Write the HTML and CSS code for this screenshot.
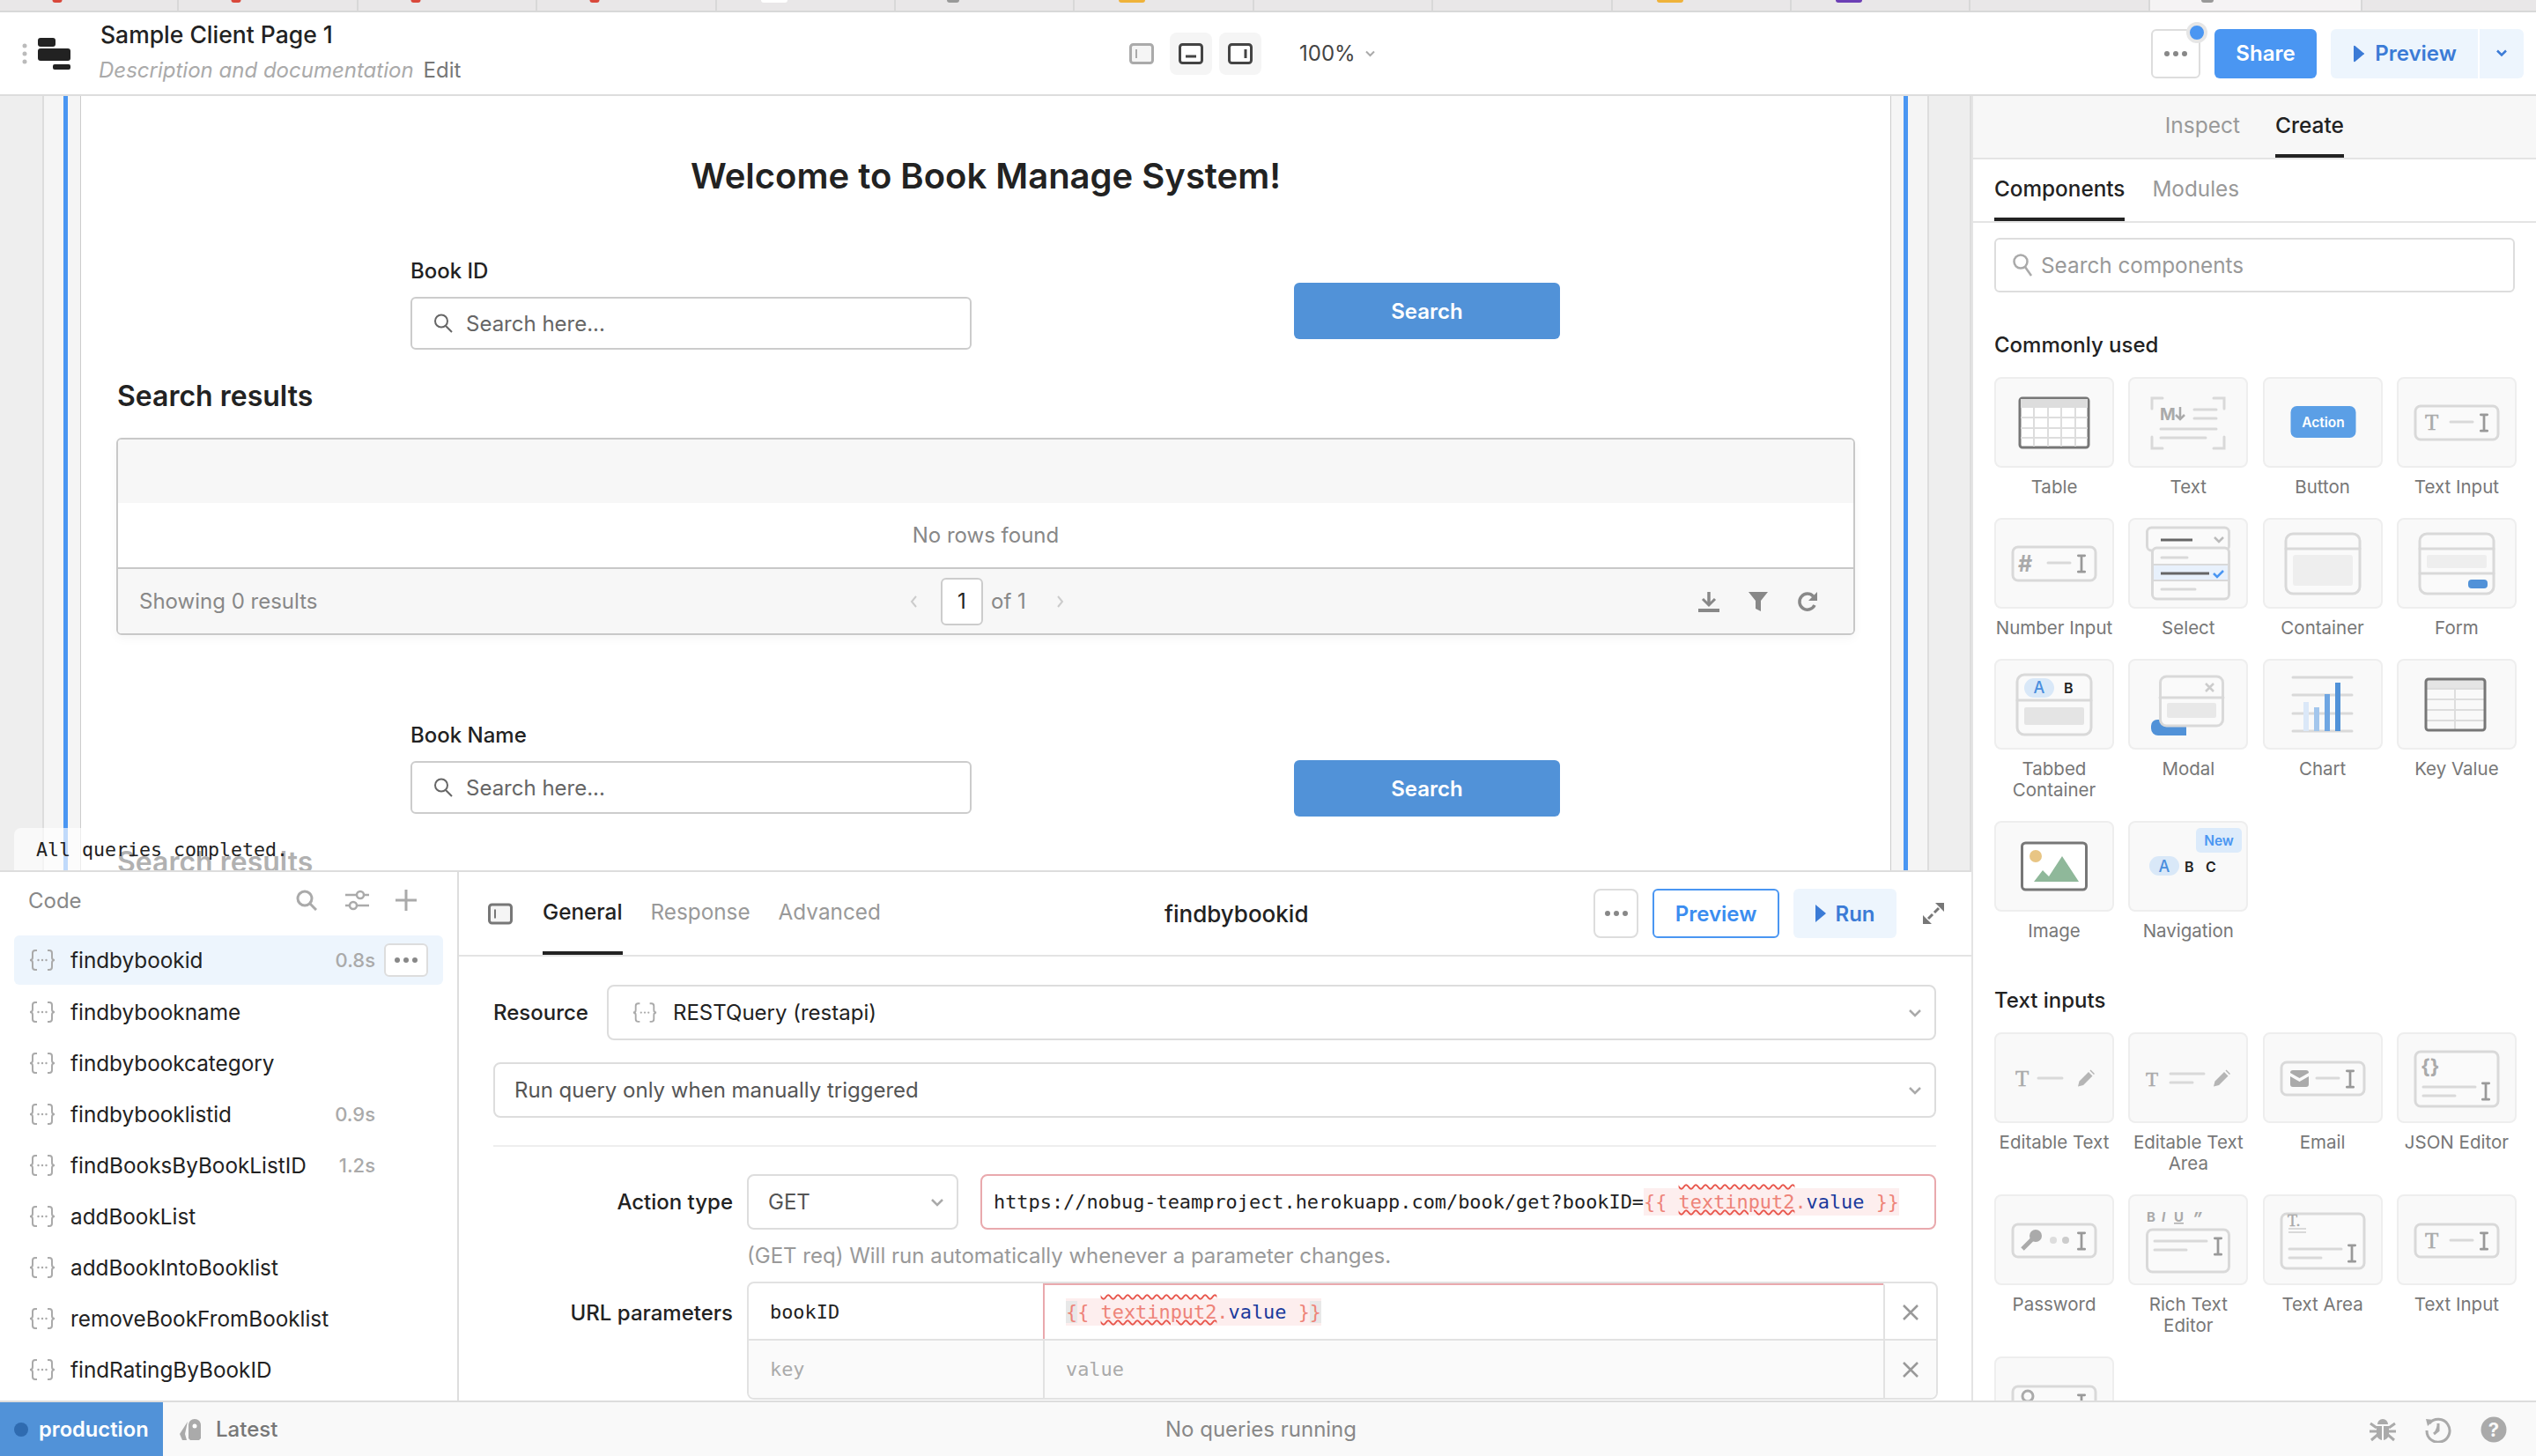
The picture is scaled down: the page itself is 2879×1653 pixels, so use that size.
FILE: index.html
```html
<!DOCTYPE html>
<html lang="en">
<head>
    <meta charset="UTF-8">
    <title>Sample Client Page 1</title>
    <link rel="stylesheet" href="styles.css">
</head>
<body>
<svg class="defs" width="0" height="0">
    <symbol id="ibeam" viewBox="0 0 12 24" overflow="visible"><path d="M2 2h8M6 2v20M2 22h8" fill="none" stroke="#999" stroke-width="3" stroke-linecap="round"/></symbol>
    <symbol id="query" viewBox="0 0 32 26"><path d="M10 2H8a3 3 0 0 0-3 3v5a3 3 0 0 1-3 3 3 3 0 0 1 3 3v5a3 3 0 0 0 3 3h2M22 2h2a3 3 0 0 1 3 3v5a3 3 0 0 0 3 3 3 3 0 0 0-3 3v5a3 3 0 0 1-3 3h-2" fill="none" stroke="#aaa" stroke-width="2"/><circle cx="11.5" cy="13" r="1.2" fill="#aaa"/><circle cx="16" cy="13" r="1.2" fill="#aaa"/><circle cx="20.5" cy="13" r="1.2" fill="#aaa"/></symbol>
    <symbol id="pencil" viewBox="0 0 20 20"><path d="M1 19l1.5-6L13 2.5l4.5 4.5L7 17.500zM14.500 1l1-1 4.500 4.500-1 1z" fill="#b5b5b5"/></symbol>
</svg>
<div class="app">
    <div class="browser-tabs">
        <div class="tab"><i class="fav red"></i></div>
        <div class="tab"><i class="fav red"></i></div>
        <div class="tab"><i class="fav red"></i></div>
        <div class="tab"><i class="fav red"></i></div>
        <div class="tab"><i class="fav white"></i></div>
        <div class="tab"><i class="fav grey"></i></div>
        <div class="tab"><i class="fav yellow"></i></div>
        <div class="tab"></div>
        <div class="tab"></div>
        <div class="tab"><i class="fav yellow"></i></div>
        <div class="tab"><i class="fav purple"></i></div>
        <div class="tab"></div>
        <div class="tab active"><i class="fav grey"></i></div>
    </div>

    <header class="topbar">
        <div class="brand">
            <svg class="grip" width="6" height="24" viewBox="0 0 6 24"><circle cx="3" cy="3" r="2.500"/><circle cx="3" cy="12" r="2.500"/><circle cx="3" cy="21" r="2.500"/></svg>
            <svg class="logo" width="37" height="36" viewBox="0 0 37 36"><rect width="20" height="10" rx="3"/><rect y="12" width="37" height="14" rx="3"/><rect x="17" y="30" width="20" height="6" rx="2"/></svg>
            <div class="page-info">
                <div class="page-title">Sample Client Page 1</div>
                <div class="page-desc"><em>Description and documentation</em><span>Edit</span></div>
            </div>
        </div>
        <div class="view-toggles">
            <span class="view-btn"><svg width="28" height="24" viewBox="0 0 28 24"><rect x="1.500" y="1.500" width="25" height="21" rx="3" fill="#f5f5f5" stroke="#aaa" stroke-width="3"/><path d="M8 7v10" stroke="#aaa" stroke-width="2"/></svg></span>
            <span class="view-btn on"><svg width="28" height="24" viewBox="0 0 28 24"><rect x="1.500" y="1.500" width="25" height="21" rx="3" fill="#fff" stroke="#444" stroke-width="3"/><path d="M8 15h12" stroke="#444" stroke-width="3"/></svg></span>
            <span class="view-btn on"><svg width="28" height="24" viewBox="0 0 28 24"><rect x="1.500" y="1.500" width="25" height="21" rx="3" fill="#fff" stroke="#444" stroke-width="3"/><path d="M20 7v10" stroke="#444" stroke-width="3"/></svg></span>
        </div>
        <div class="zoom-level">100%<svg width="13" height="8" viewBox="0 0 13 8"><path d="M2 1.500l4.500 4.500L11 1.500" fill="none" stroke="#aaa" stroke-width="2"/></svg></div>
        <div class="top-actions">
            <button class="dots-btn"><span class="dots"><i></i><i></i><i></i></span><b class="notify"></b></button>
            <button class="share-btn">Share</button>
            <div class="preview-split">
                <button class="preview-btn"><svg width="14" height="20" viewBox="0 0 14 20"><path d="M2 1.500a1 1 0 0 1 1.500-.5L13 9a1 1 0 0 1 0 2l-9.500 8a1 1 0 0 1-1.500-.5z" fill="#3b7bd6"/></svg>Preview</button>
                <button class="preview-more"><svg width="14" height="9" viewBox="0 0 14 9"><path d="M2 1.500l5 5 5-5" fill="none" stroke="#3b7bd6" stroke-width="2.500"/></svg></button>
            </div>
        </div>
    </header>

    <div class="workspace">
        <div class="main-col">
            <div class="canvas-area">
                <div class="gutter"></div>
                <div class="frame">
                    <div class="frame-inner">
                        <div class="canvas">
                            <h1 class="welcome">Welcome to Book Manage System!</h1>
                            <div class="search-row">
                                <div class="field">
                                    <label>Book ID</label>
                                    <div class="search-box"><svg width="22" height="22" viewBox="0 0 22 22"><circle cx="9" cy="8.500" r="7" fill="none" stroke="#666" stroke-width="2"/><path d="M14 14l7 7" stroke="#666" stroke-width="2"/></svg>Search here...</div>
                                </div>
                                <button class="search-btn">Search</button>
                            </div>
                            <h2 class="results-title">Search results</h2>
                            <div class="data-table">
                                <div class="table-head"></div>
                                <div class="table-empty">No rows found</div>
                                <div class="table-foot">
                                    <span class="count">Showing 0 results</span>
                                    <div class="pager">
                                        <svg width="10" height="16" viewBox="0 0 10 16"><path d="M8 2L3 8l5 6" fill="none" stroke="#ccc" stroke-width="2"/></svg>
                                        <span class="page-box">1</span>
                                        <span class="page-of">of 1</span>
                                        <svg width="10" height="16" viewBox="0 0 10 16"><path d="M2 2l5 6-5 6" fill="none" stroke="#ccc" stroke-width="2"/></svg>
                                    </div>
                                    <div class="table-tools">
                                        <svg width="24" height="24" viewBox="0 0 24 24"><path d="M12 1v13" stroke="#888" stroke-width="3.500"/><path d="M5 9l7 7 7-7" fill="none" stroke="#888" stroke-width="3"/><path d="M0 22h24" stroke="#888" stroke-width="4"/></svg>
                                        <svg width="24" height="24" viewBox="0 0 24 24"><path d="M1 1h22l-8 10v12l-6-3v-9z" fill="#888"/></svg>
                                        <svg width="24" height="24" viewBox="0 0 24 24"><path d="M20 16a9 9 0 1 1-1.500-10" fill="none" stroke="#888" stroke-width="3.500"/><path d="M23 1v10H13z" fill="#888"/></svg>
                                    </div>
                                </div>
                            </div>
                            <div class="search-row second">
                                <div class="field">
                                    <label>Book Name</label>
                                    <div class="search-box"><svg width="22" height="22" viewBox="0 0 22 22"><circle cx="9" cy="8.500" r="7" fill="none" stroke="#666" stroke-width="2"/><path d="M14 14l7 7" stroke="#666" stroke-width="2"/></svg>Search here...</div>
                                </div>
                                <button class="search-btn">Search</button>
                            </div>
                            <h2 class="results-title last">Search results</h2>
                        </div>
                    </div>
                </div>
                <div class="gutter right"></div>
                <div class="toast">All queries completed.</div>
            </div>

            <div class="editor">
                <aside class="code-list">
                    <div class="code-head">
                        <span>Code</span>
                        <svg class="first" width="24" height="24" viewBox="0 0 24 24"><circle cx="10" cy="10" r="8" fill="none" stroke="#aaa" stroke-width="3"/><path d="M16 16l7 7" stroke="#aaa" stroke-width="3"/></svg>
                        <svg width="28" height="24" viewBox="0 0 28 24"><path d="M1 6h27M1 18h27" stroke="#aaa" stroke-width="2.500"/><circle cx="18" cy="6" r="4" fill="#fff" stroke="#aaa" stroke-width="2.500"/><circle cx="10" cy="18" r="4" fill="#fff" stroke="#aaa" stroke-width="2.500"/></svg>
                        <svg width="26" height="26" viewBox="0 0 26 26"><path d="M13 1v24M1 13h24" stroke="#aaa" stroke-width="3"/></svg>
                    </div>
                    <div class="query selected"><svg width="32" height="26"><use href="#query"/></svg><span class="q-name">findbybookid</span><span class="q-time">0.8s</span><span class="q-more"><span class="dots"><i></i><i></i><i></i></span></span></div>
                    <div class="query"><svg width="32" height="26"><use href="#query"/></svg><span class="q-name">findbybookname</span></div>
                    <div class="query"><svg width="32" height="26"><use href="#query"/></svg><span class="q-name">findbybookcategory</span></div>
                    <div class="query"><svg width="32" height="26"><use href="#query"/></svg><span class="q-name">findbybooklistid</span><span class="q-time">0.9s</span></div>
                    <div class="query"><svg width="32" height="26"><use href="#query"/></svg><span class="q-name">findBooksByBookListID</span><span class="q-time">1.2s</span></div>
                    <div class="query"><svg width="32" height="26"><use href="#query"/></svg><span class="q-name">addBookList</span></div>
                    <div class="query"><svg width="32" height="26"><use href="#query"/></svg><span class="q-name">addBookIntoBooklist</span></div>
                    <div class="query"><svg width="32" height="26"><use href="#query"/></svg><span class="q-name">removeBookFromBooklist</span></div>
                    <div class="query"><svg width="32" height="26"><use href="#query"/></svg><span class="q-name">findRatingByBookID</span></div>
                </aside>

                <section class="query-panel">
                    <div class="panel-head">
                        <div class="panel-tabs">
                            <svg width="28" height="25" viewBox="0 0 28 24"><rect x="1.500" y="1.500" width="25" height="21" rx="3" fill="#f5f5f5" stroke="#777" stroke-width="3"/><path d="M8 7v10" stroke="#777" stroke-width="2"/></svg>
                            <span class="ptab on">General</span>
                            <span class="ptab">Response</span>
                            <span class="ptab">Advanced</span>
                        </div>
                        <div class="panel-title">findbybookid</div>
                        <div class="panel-actions">
                            <button class="dots-btn small"><span class="dots"><i></i><i></i><i></i></span></button>
                            <button class="outline-btn">Preview</button>
                            <button class="run-btn"><svg width="14" height="22" viewBox="0 0 14 22"><path d="M1 1l12 10L1 21z" fill="#3b7bd6"/></svg>Run</button>
                            <svg class="expand" width="26" height="26" viewBox="0 0 26 26"><path d="M15 1h10v10zM1 15v10h10z" fill="#777"/><path d="M19 7l-5 5M7 19l5-5" stroke="#777" stroke-width="3"/></svg>
                        </div>
                    </div>
                    <div class="panel-body">
                        <div class="res-row">
                            <span class="res-label">Resource</span>
                            <div class="select grow"><svg width="30" height="25"><use href="#query"/></svg><span class="res-value">RESTQuery (restapi)</span><svg class="chev" width="16" height="10" viewBox="0 0 16 10"><path d="M2 2l6 6 6-6" fill="none" stroke="#aaa" stroke-width="2.500"/></svg></div>
                        </div>
                        <div class="select trigger"><span>Run query only when manually triggered</span><svg class="chev" width="16" height="10" viewBox="0 0 16 10"><path d="M2 2l6 6 6-6" fill="none" stroke="#aaa" stroke-width="2.500"/></svg></div>
                        <hr class="divider">
                        <div class="form-row">
                            <span class="form-label">Action type</span>
                            <div class="select method"><span>GET</span><svg class="chev" width="16" height="10" viewBox="0 0 16 10"><path d="M2 2l6 6 6-6" fill="none" stroke="#aaa" stroke-width="2.500"/></svg></div>
                            <div class="url-box code">https://nobug-teamproject.herokuapp.com/book/get?bookID=<span class="tpl"><span class="br">{{</span> <span class="bad">textinput2</span><span class="br">.</span><span class="prop">value</span> <span class="br">}}</span></span></div>
                        </div>
                        <div class="hint">(GET req) Will run automatically whenever a parameter changes.</div>
                        <div class="form-row params">
                            <span class="form-label">URL parameters</span>
                            <div class="param-table code">
                                <div class="p-key">bookID</div>
                                <div class="p-val error"><span class="tpl"><span class="match">{</span><span class="br">{</span> <span class="bad">textinput2</span><span class="br">.</span><span class="prop">value</span> <span class="br">}</span><span class="match">}</span></span></div>
                                <div class="p-del"><svg width="20" height="20" viewBox="0 0 20 20"><path d="M2 2l16 16M18 2L2 18" stroke="#999" stroke-width="2.500"/></svg></div>
                                <div class="p-key empty">key</div>
                                <div class="p-val empty">value</div>
                                <div class="p-del empty"><svg width="20" height="20" viewBox="0 0 20 20"><path d="M2 2l16 16M18 2L2 18" stroke="#999" stroke-width="2.500"/></svg></div>
                            </div>
                        </div>
                    </div>
                </section>
            </div>
        </div>

        <aside class="sidebar">
            <div class="side-tabs"><span>Inspect</span><span class="on">Create</span></div>
            <div class="comp-tabs"><span class="on">Components</span><span>Modules</span></div>
            <div class="comp-search"><svg width="24" height="28" viewBox="0 0 24 28"><circle cx="10" cy="10" r="7.500" fill="none" stroke="#aaa" stroke-width="2.500"/><path d="M15 16l7 10" stroke="#aaa" stroke-width="2.500"/></svg>Search components</div>

            <h3 class="group-title">Commonly used</h3>
            <div class="comp-grid">
                <div class="comp"><div class="card"><svg viewBox="0 0 136 103">
                    <rect class="frame-dark" x="29" y="24" width="78" height="56" rx="3"/>
                    <rect x="30" y="25" width="76" height="10" fill="#ddd"/>
                    <path class="thin" d="M30 46h76M30 58h76M30 69h76M45 35v44M61 35v44M76 35v44M92 35v44"/>
                </svg></div><span>Table</span></div>
                <div class="comp"><div class="card"><svg viewBox="0 0 136 103">
                    <path class="ln" d="M39 24H27v12M97 24h12v12M27 68v13h12M109 68v13H97"/>
                    <text class="ic-text" x="36" y="49" font-size="19">M</text>
                    <path d="M59 34v14M54 43l5 5 5-5" fill="none" stroke="#aaa" stroke-width="2.500"/>
                    <path class="ln" d="M75 37h25M75 47h25M37 59h63M37 69h51"/>
                </svg></div><span>Text</span></div>
                <div class="comp"><div class="card"><svg viewBox="0 0 136 103">
                    <rect x="31.500" y="33" width="74" height="36" rx="7" fill="#5b9fe6"/>
                    <text class="ic-white" x="68.500" y="57" text-anchor="middle" font-size="15.500">Action</text>
                </svg></div><span>Button</span></div>
                <div class="comp"><div class="card"><svg viewBox="0 0 136 103">
                    <rect class="box" x="21" y="33" width="94" height="38" rx="6"/>
                    <text class="ic-serif" x="32" y="60" font-size="25">T</text>
                    <path class="ln" d="M61 51h25"/>
                    <use href="#ibeam" x="93" y="41" width="12" height="22"/>
                </svg></div><span>Text Input</span></div>

                <div class="comp"><div class="card"><svg viewBox="0 0 136 103">
                    <rect class="box" x="21" y="33" width="94" height="38" rx="6"/>
                    <text class="ic-text" x="27" y="61" font-size="25">#</text>
                    <path class="ln" d="M61 51h25"/>
                    <use href="#ibeam" x="93" y="41" width="12" height="22"/>
                </svg></div><span>Number Input</span></div>
                <div class="comp"><div class="card"><svg viewBox="0 0 136 103">
                    <rect class="box" x="21.500" y="11" width="93" height="26" rx="5"/>
                    <path d="M37 25h36" stroke="#666" stroke-width="3"/>
                    <path d="M98 22l5 5 5-5" fill="none" stroke="#bbb" stroke-width="2.500"/>
                    <rect class="box" x="27.500" y="34" width="87" height="58" rx="5"/>
                    <rect x="29" y="54" width="84" height="16" fill="#e8f1fc"/>
                    <path class="ln thin2" d="M29 53h84M29 71h84"/>
                    <path class="ln" d="M38 45h29M38 81h38"/>
                    <path d="M37 63h55" stroke="#666" stroke-width="3"/>
                    <path d="M97 63l4 4 7-7" fill="none" stroke="#4a96f2" stroke-width="2.500"/>
                </svg></div><span>Select</span></div>
                <div class="comp"><div class="card"><svg viewBox="0 0 136 103">
                    <rect class="box" x="26" y="18" width="84" height="68" rx="8"/>
                    <path class="ln" d="M26 35h84"/>
                    <rect x="34" y="42" width="68" height="35" rx="3" fill="#eee"/>
                </svg></div><span>Container</span></div>
                <div class="comp"><div class="card"><svg viewBox="0 0 136 103">
                    <rect class="box" x="26" y="18" width="84" height="68" rx="8"/>
                    <path class="ln" d="M26 35h84M26 63h84"/>
                    <rect x="34" y="42" width="68" height="15" rx="2" fill="#eee"/>
                    <rect x="81" y="70" width="22" height="10" rx="4" fill="#5192d8"/>
                </svg></div><span>Form</span></div>

                <div class="comp"><div class="card"><svg viewBox="0 0 136 103">
                    <rect class="box" x="26" y="18" width="84" height="68" rx="8"/>
                    <path class="ln" d="M26 47h84"/>
                    <rect x="34" y="22" width="34" height="22" rx="11" fill="#d9e8f8"/>
                    <text class="ic-blue" x="51" y="39" text-anchor="middle" font-size="18">A</text>
                    <text class="ic-dark" x="79" y="39" font-size="16">B</text>
                    <rect x="34" y="55" width="68" height="20" rx="2" fill="#e4e4e4"/>
                </svg></div><span>Tabbed Container</span></div>
                <div class="comp"><div class="card"><svg viewBox="0 0 136 103">
                    <path d="M26 76a7 7 0 0 1 7-7h33v18H34a8 8 0 0 1-8-8z" fill="#5192d8"/>
                    <rect class="box" x="36.500" y="20" width="71" height="56" rx="7" fill="#fafafa"/>
                    <path class="ln" d="M36 44h72"/>
                    <rect x="44" y="50" width="56" height="17" rx="2" fill="#e8e8e8"/>
                    <path d="M88 28l9 9M97 28l-9 9" stroke="#ccc" stroke-width="2.500"/>
                </svg></div><span>Modal</span></div>
                <div class="comp"><div class="card"><svg viewBox="0 0 136 103">
                    <path class="ln" d="M34 21h67M34 41h67M34 62h67M34 82h67"/>
                    <rect x="46" y="49" width="6" height="33" fill="#dbe8f8"/>
                    <rect x="58" y="55" width="6" height="27" fill="#a3c6ec"/>
                    <rect x="70" y="40" width="6" height="42" fill="#6fa6e2"/>
                    <rect x="82" y="27" width="6" height="55" fill="#5192d8"/>
                </svg></div><span>Chart</span></div>
                <div class="comp"><div class="card"><svg viewBox="0 0 136 103">
                    <rect x="33" y="23" width="67" height="11" fill="#e5e5e5"/>
                    <path class="thin" d="M33 34h67M33 46h67M33 58h67M33 70h67M66 34v46"/>
                    <rect class="frame-dark none" x="33" y="23" width="67" height="58" rx="3"/>
                </svg></div><span>Key Value</span></div>

                <div class="comp"><div class="card"><svg viewBox="0 0 136 103">
                    <rect class="frame-dark" x="31.500" y="25" width="73" height="53" rx="4"/>
                    <circle cx="47" cy="40" r="7" fill="#e8c584"/>
                    <path d="M45 69l10-13 7 7 15-23 19 29z" fill="#8fb89a"/>
                </svg></div><span>Image</span></div>
                <div class="comp"><div class="card"><svg viewBox="0 0 136 103">
                    <rect x="77" y="8" width="52" height="28" rx="5" fill="#dcebfb"/>
                    <text class="ic-new" x="103" y="28" text-anchor="middle" font-size="15.500">New</text>
                    <rect x="24" y="40" width="34" height="22" rx="11" fill="#d9e8f8"/>
                    <text class="ic-blue" x="41" y="58" text-anchor="middle" font-size="18">A</text>
                    <text class="ic-dark" x="64" y="58" font-size="16">B</text>
                    <text class="ic-dark" x="88" y="58" font-size="16">C</text>
                </svg></div><span>Navigation</span></div>
            </div>

            <h3 class="group-title next">Text inputs</h3>
            <div class="comp-grid">
                <div class="comp"><div class="card"><svg viewBox="0 0 136 103">
                    <text class="ic-serif" x="24" y="61" font-size="25">T</text>
                    <path class="ln" d="M50 52h27"/>
                    <use href="#pencil" x="94" y="42" width="20" height="21"/>
                </svg></div><span>Editable Text</span></div>
                <div class="comp"><div class="card"><svg viewBox="0 0 136 103">
                    <text class="ic-serif" x="20" y="61" font-size="23">T</text>
                    <path class="ln" d="M48 47h38M48 57h25"/>
                    <use href="#pencil" x="96" y="42" width="20" height="21"/>
                </svg></div><span>Editable Text Area</span></div>
                <div class="comp"><div class="card"><svg viewBox="0 0 136 103">
                    <rect class="box" x="21" y="34" width="94" height="37" rx="6"/>
                    <path d="M31 46a3 3 0 0 1 3-3h15a3 3 0 0 1 3 3l-10.500 6zM31 50l10.500 6L52 50v9a3 3 0 0 1-3 3H34a3 3 0 0 1-3-3z" fill="#aaa"/>
                    <path class="ln" d="M61 52h25"/>
                    <use href="#ibeam" x="93" y="42" width="12" height="22"/>
                </svg></div><span>Email</span></div>
                <div class="comp"><div class="card"><svg viewBox="0 0 136 103">
                    <rect class="box" x="21" y="22" width="94" height="62" rx="6"/>
                    <text class="ic-text" x="27" y="47" font-size="23">{}</text>
                    <path class="ln" d="M30 62h59M30 72h36"/>
                    <use href="#ibeam" x="95" y="56" width="12" height="22"/>
                </svg></div><span>JSON Editor</span></div>

                <div class="comp"><div class="card"><svg viewBox="0 0 136 103">
                    <rect class="box" x="21" y="34" width="94" height="37" rx="6"/>
                    <circle cx="47" cy="47" r="7" fill="#aaa"/><path d="M43 51L32 62" stroke="#aaa" stroke-width="5"/>
                    <circle cx="67" cy="52" r="4" fill="#ddd"/><circle cx="81" cy="52" r="4" fill="#ccc"/>
                    <use href="#ibeam" x="93" y="42" width="12" height="22"/>
                </svg></div><span>Password</span></div>
                <div class="comp"><div class="card"><svg viewBox="0 0 136 103">
                    <text class="ic-text" x="21" y="31" font-size="15">B</text>
                    <text class="ic-text" x="38" y="31" font-size="15" font-style="italic">I</text>
                    <text class="ic-text" x="52" y="31" font-size="15" text-decoration="underline">U</text>
                    <text class="ic-text" x="73" y="34" font-size="19" font-style="italic">”</text>
                    <rect class="box" x="21.500" y="40" width="93" height="48" rx="6"/>
                    <path class="ln" d="M30 53h59M30 63h36"/>
                    <use href="#ibeam" x="96" y="48" width="12" height="22"/>
                </svg></div><span>Rich Text Editor</span></div>
                <div class="comp"><div class="card"><svg viewBox="0 0 136 103">
                    <rect class="box" x="21" y="22" width="94" height="62" rx="6"/>
                    <text class="ic-serif" x="28" y="36" font-size="18">T.</text>
                    <path class="ln thin2" d="M29 39h20M29 43h20"/>
                    <path class="ln" d="M30 62h59M30 72h36"/>
                    <use href="#ibeam" x="95" y="56" width="12" height="22"/>
                </svg></div><span>Text Area</span></div>
                <div class="comp"><div class="card"><svg viewBox="0 0 136 103">
                    <rect class="box" x="21" y="34" width="94" height="37" rx="6"/>
                    <text class="ic-serif" x="32" y="61" font-size="25">T</text>
                    <path class="ln" d="M61 52h25"/>
                    <use href="#ibeam" x="93" y="42" width="12" height="22"/>
                </svg></div><span>Text Input</span></div>

                <div class="comp"><div class="card"><svg viewBox="0 0 136 103">
                    <rect class="box" x="21" y="34" width="94" height="37" rx="6"/>
                    <circle cx="38" cy="45" r="6" fill="none" stroke="#aaa" stroke-width="3"/>
                    <use href="#ibeam" x="93" y="42" width="12" height="22"/>
                </svg></div><span></span></div>
            </div>
        </aside>
    </div>

    <footer class="statusbar">
        <div class="status-left">
            <div class="env"><i></i>production</div>
            <div class="release"><svg width="26" height="26" viewBox="0 0 26 26"><path d="M10 4L1 18l3 7h5l-2-7z" fill="#aaa"/><path d="M18 1c-4 0-7 3-7 7v15l2 2h10l2-2V8c0-4-3-7-7-7z" fill="#aaa"/><circle cx="18" cy="9" r="2.500" fill="#fff"/></svg>Latest</div>
        </div>
        <div class="status-mid">No queries running</div>
        <div class="status-right">
            <svg width="30" height="30" viewBox="0 0 30 30"><path d="M9 9a6 6 0 0 1 12 0zM8 11h14v9a7 7 0 0 1-14 0z" fill="#aaa"/><path d="M15 11v16M1 8l7 5M29 8l-7 5M0 17h8M30 17h-8M2 27l7-6M28 27l-7-6" stroke="#aaa" stroke-width="3" fill="none"/><path d="M15 11v16" stroke="#f9f9f9" stroke-width="2"/></svg>
            <svg width="30" height="30" viewBox="0 0 30 30"><path d="M5 8a13 13 0 1 1-3 8" fill="none" stroke="#aaa" stroke-width="3"/><path d="M1 3l9 1-7 7zM15 8v8l-5 4" fill="#aaa" stroke="none"/><path d="M15 8v8l-5 4" fill="none" stroke="#aaa" stroke-width="3"/></svg>
            <svg width="30" height="30" viewBox="0 0 30 30"><circle cx="15" cy="15" r="14.500" fill="#aaa"/><text class="help-mark" x="15" y="23" text-anchor="middle" font-size="22">?</text></svg>
        </div>
    </footer>
</div>
</body>
</html>
```

FILE: styles.css
```css
* { box-sizing: border-box; }
html, body { margin: 0; height: 100%; overflow: hidden; }
body { font-family: Inter, "Noto Sans", sans-serif; font-size: 22px; color: #222; background: #fff; }
button { font: inherit; border: 0; padding: 0; cursor: pointer; }
.defs { position: absolute; }
.app { width: 2879px; height: 1653px; display: flex; flex-direction: column; overflow: hidden; }

/* browser tab strip */
.browser-tabs { height: 14px; flex: none; display: flex; background: #e9e7e8; border-bottom: 2px solid #d8d8d8; }
.tab { width: 203.400px; flex: none; border-right: 2px solid #d8d8d8; position: relative; }
.tab.active { width: 241px; background: #f5f3f4; }
.fav { position: absolute; left: 65px; top: 0; width: 30px; height: 3px; border-radius: 0 0 3px 3px; transform: translateX(-50%); }
.fav.red { background: #d9483b; width: 11px; }
.fav.white { background: #fff; }
.fav.grey { background: #999; width: 14px; }
.fav.yellow { background: #efb23a; }
.fav.purple { background: #6c3fb5; }

/* top bar */
.topbar { height: 95px; flex: none; display: flex; align-items: center; background: #fff; border-bottom: 2px solid #ddd; padding: 0 14px 0 25px; }
.brand { display: flex; align-items: center; width: 1247px; }
.grip { fill: #bbb; margin-right: 12px; }
.logo { fill: #222; margin-right: 34px; }
.page-info { margin-top: -2px; }
.page-title { font-size: 26.500px; font-weight: 500; line-height: 30px; }
.page-desc { font-size: 24px; line-height: 30px; margin-top: 11px; color: #777; margin-left: -2px; }
.page-desc em { color: #aaa; margin-right: 11px; }
.view-toggles { display: flex; align-items: center; gap: 8px; }
.view-btn { width: 48px; height: 48px; border-radius: 8px; display: flex; align-items: center; justify-content: center; }
.view-btn.on { background: #f5f5f5; }
.zoom-level { margin-left: 43px; font-size: 24px; color: #444; display: flex; align-items: center; gap: 10px; }
.top-actions { margin-left: auto; display: flex; align-items: center; }
.dots { display: inline-flex; gap: 4px; }
.dots i { width: 6px; height: 6px; border-radius: 50%; background: #888; }
.dots-btn { position: relative; width: 56px; height: 56px; background: #fff; border: 2px solid #ddd; border-radius: 6px; display: flex; align-items: center; justify-content: center; }
.notify { position: absolute; right: -10px; top: -10px; width: 24px; height: 24px; border-radius: 50%; background: #4a96f2; border: 4px solid #e6e6e6; }
.share-btn { margin-left: 16px; width: 116px; height: 56px; border-radius: 6px; background: #4a96f2; color: #fff; font-weight: 600; font-size: 24px; }
.preview-split { margin-left: 16px; display: flex; height: 56px; background: #edf5fd; border-radius: 6px; }
.preview-btn { width: 169px; background: none; color: #3b7bd6; font-weight: 600; font-size: 24px; display: flex; align-items: center; justify-content: center; gap: 12px; border-right: 2px solid #fff; }
.preview-more { width: 50px; background: none; display: flex; align-items: center; justify-content: center; }

/* workspace */
.workspace { flex: 1; display: flex; min-height: 0; }
.main-col { width: 2238px; flex: none; display: flex; flex-direction: column; }
.canvas-area { height: 879px; flex: none; display: flex; position: relative; overflow: hidden; background: #eee; }
.gutter { width: 48px; flex: none; }
.frame { flex: 1; background: #f5f5f5; border: solid #ddd; border-width: 0 2px; padding: 0 22px; }
.frame-inner { height: 100%; border: solid #4a96f2; border-width: 0 5px; padding: 0 14px 0 14px; }
.canvas { height: 100%; background: #fff; border: solid #ccc; border-width: 0 1px; overflow: hidden; padding-top: 66px; }
.gutter.right { width: 48px; border-right: 2px solid #ddd; }
.welcome { margin: 0; font-size: 40px; line-height: 50px; font-weight: 600; text-align: center; }
.search-row { display: flex; margin: 70px 0 0 374px; }
.search-row.second { margin-top: 101px; }
.field { width: 637px; }
.field label { display: block; font-size: 24px; font-weight: 500; line-height: 26px; }
.search-box { margin-top: 16px; height: 60px; border: 2px solid #ccc; border-radius: 6px; display: flex; align-items: center; gap: 15px; padding-left: 24px; color: #666; font-size: 24px; }
.search-btn { margin: 26px 0 0 366px; width: 302px; height: 64px; background: #5192d8; color: #fff; border-radius: 6px; font-weight: 600; font-size: 24px; }
.second .search-btn { margin-top: 41px; }
.results-title { margin: 33px 0 0 41px; font-size: 32px; line-height: 40px; font-weight: 600; }
.results-title.last { margin-top: 32px; }
.data-table { margin: 27px 0 0 40px; width: 1974px; height: 224px; border: 2px solid #c8c8c8; border-radius: 6px; display: flex; flex-direction: column; overflow: hidden; box-shadow: 0 4px 12px rgba(0, 0, 0, .04); }
.table-head { height: 72px; background: #f7f7f7; }
.table-empty { height: 75px; display: flex; align-items: center; justify-content: center; font-size: 24px; color: #888; border-bottom: 2px solid #c8c8c8; }
.table-foot { flex: 1; background: #f7f7f7; display: flex; align-items: center; padding: 0 24px; position: relative; font-size: 24px; color: #888; }
.pager { position: absolute; left: 898px; display: flex; align-items: center; }
.page-box { width: 48px; height: 54px; margin-left: 26px; background: #fff; border: 2px solid #ccc; border-radius: 6px; color: #222; display: flex; align-items: center; justify-content: center; }
.page-of { margin: 0 34px 0 9px; }
.table-tools { margin-left: auto; display: flex; gap: 32px; margin-right: 16px; }
.toast { position: absolute; left: 16px; bottom: 0; height: 48px; width: 345px; padding: 12px 0 0 25px; background: rgba(255, 255, 255, .65); border-radius: 8px 8px 0 0; font-family: "DejaVu Sans Mono", monospace; font-size: 21.600px; line-height: 26px; color: #222; white-space: nowrap; }

/* bottom editor */
.editor { flex: 1; display: flex; min-height: 0; background: #fff; border-top: 2px solid #ddd; }
.code-list { width: 521px; flex: none; border-right: 2px solid #ddd; padding: 0 16px; }
.code-head { height: 64px; display: flex; align-items: center; padding-left: 16px; color: #888; font-size: 24px; }
.code-head svg { margin-left: 31px; }
.code-head .first { margin-left: auto; }
.code-head svg:last-child { margin-right: 29px; margin-left: 29px; }
.query { height: 58px; display: flex; align-items: center; padding-left: 16px; position: relative; }
.query.selected { height: 56px; margin: 8px 0 2px; background: #edf5fd; border-radius: 6px; }
.q-name { margin-left: 16px; font-size: 24.300px; font-weight: 400; color: #222; white-space: nowrap; }
.q-time { position: absolute; right: 77px; color: #aaa; font-size: 22px; font-weight: 500; }
.q-more { position: absolute; right: 17px; top: 9px; width: 50px; height: 38px; background: #fff; border: 2px solid #ddd; border-radius: 6px; display: flex; align-items: center; justify-content: center; }
.query-panel { flex: 1; min-width: 0; display: flex; flex-direction: column; }
.panel-head { height: 96px; flex: none; display: flex; align-items: center; border-bottom: 2px solid #e4e4e4; padding: 0 30px 0 33px; }
.panel-tabs { width: 768px; height: 100%; display: flex; align-items: center; }
.ptab { height: 100%; display: flex; align-items: center; font-size: 24.300px; color: #999; margin-right: 32px; border-bottom: 4px solid transparent; }
.panel-tabs svg { margin-right: 34px; }
.ptab.on { color: #222; font-weight: 500; border-bottom-color: #222; }
.panel-title { font-size: 26px; font-weight: 500; }
.panel-actions { margin-left: auto; display: flex; align-items: center; }
.dots-btn.small { width: 51px; height: 56px; border-radius: 8px; }
.outline-btn { margin-left: 16px; width: 144px; height: 56px; background: #fff; border: 2px solid #4a96f2; border-radius: 6px; color: #3b8df0; font-weight: 600; font-size: 24px; }
.run-btn { margin-left: 16px; width: 117px; height: 56px; background: #edf5fd; border-radius: 6px; color: #3b7bd6; font-weight: 600; font-size: 24px; display: flex; align-items: center; justify-content: center; gap: 9px; }
.expand { margin-left: 29px; }
.panel-body { flex: 1; padding: 32px 40px 0 39px; overflow: hidden; }
.res-row { display: flex; align-items: center; }
.res-label { width: 129px; flex: none; font-size: 24px; font-weight: 500; }
.select { height: 63px; border: 2px solid #ddd; border-radius: 8px; display: flex; align-items: center; padding: 0 14px 0 22px; font-size: 24px; color: #555; background: #fff; }
.grow { flex: 1; padding-left: 26px; }
.chev { margin-left: auto; }
.res-value { margin-left: 17px; color: #222; }
.trigger { margin-top: 25px; }
.divider { margin: 31px 0; border: 0; height: 2px; background: #eee; }
.form-row { display: flex; align-items: center; }
.form-label { width: 272px; flex: none; margin-right: 16px; text-align: right; font-size: 24px; font-weight: 500; }
.method { width: 240px; flex: none; }
.code { font-family: "DejaVu Sans Mono", monospace; font-size: 21.900px; }
.url-box { flex: 1; height: 63px; margin-left: 25px; border: 2px solid #e9a9ad; border-radius: 8px; display: flex; align-items: center; padding-left: 13px; white-space: pre; }
.tpl { background: #fdeeee; color: #ee8378; white-space: pre; padding: 3px 0; }
.bad { text-decoration: underline overline wavy #e8564c 1.500px; text-underline-offset: 1px; }
.prop { color: #1a3a9c; }
.match { background: #e8e8e8; }
.hint { margin: 17px 0 16px 288px; font-size: 24px; line-height: 26px; color: #999; }
.params { align-items: flex-start; }
.params .form-label { margin-top: 21px; }
.param-table { flex: 1; margin-right: -2px; height: 134px; border: 2px solid #e2e2e2; border-radius: 8px; display: grid; grid-template-columns: 336px 1fr 60px; grid-template-rows: 63px 1fr; overflow: hidden; }
.param-table > div { display: flex; align-items: center; border-top: 2px solid transparent; }
.p-key { padding-left: 24px; border-right: 2px solid #e2e2e2; }
.p-val { padding-left: 24px; }
.p-val.error { border-top-color: #e9a9ad; border-left: 2px solid #e9a9ad; margin-left: -2px; }
.p-del { justify-content: center; border-left: 2px solid #e2e2e2; }
.param-table > .empty { background: #fafafa; color: #aaa; border-top-color: #e2e2e2; }

/* right sidebar */
.sidebar { width: 641px; flex: none; overflow: hidden; background: #fff; border-left: 2px solid #e4e4e4; }
.side-tabs { height: 72px; background: #f7f7f7; border-bottom: 2px solid #e4e4e4; display: flex; justify-content: flex-end; padding-right: 218px; gap: 40px; font-size: 24.500px; color: #999; }
.side-tabs span, .comp-tabs span { display: flex; align-items: center; border-bottom: 4px solid transparent; }
.side-tabs .on, .comp-tabs .on { color: #222; font-weight: 500; border-bottom-color: #222; }
.comp-tabs { height: 72px; border-bottom: 2px solid #e4e4e4; display: flex; gap: 31px; padding-left: 24px; font-size: 24.300px; color: #999; }
.comp-search { margin: 17px 24px 0 24px; height: 62px; border: 2px solid #ddd; border-radius: 6px; display: flex; align-items: center; gap: 9px; padding-left: 18px; font-size: 24.300px; color: #999; }
.group-title { margin: 47px 0 23px 24px; font-size: 24px; line-height: 26px; font-weight: 500; }
.group-title.next { margin-top: 54px; }
.comp-grid { display: grid; grid-template-columns: repeat(4, 136px); column-gap: 16.300px; row-gap: 23px; padding-left: 24px; }
.comp { text-align: center; font-size: 20.500px; line-height: 24px; color: #777; }
.comp span { display: block; margin-top: 10px; }
.card { height: 103px; background: #f9f9f9; border: 2px solid #eee; border-radius: 8px; overflow: hidden; }
.card svg { display: block; width: 136px; height: 103px; margin: -2px; }
.frame-dark { fill: #fff; stroke: #777; stroke-width: 3; }
.frame-dark.none { fill: none; }
.thin { fill: none; stroke: #ddd; stroke-width: 2; }
.ln { fill: none; stroke: #d9d9d9; stroke-width: 3; stroke-linecap: round; }
.ln.thin2 { stroke-width: 2; stroke-linecap: butt; }
.box { fill: #fafafa; stroke: #d9d9d9; stroke-width: 3; }
.ic-text { font-family: Inter, sans-serif; font-weight: 700; fill: #aaa; }
.ic-serif { font-family: "Liberation Serif", serif; fill: #aaa; stroke: #aaa; stroke-width: .5; }
.ic-white { font-family: Inter, sans-serif; font-weight: 600; fill: #fff; }
.ic-blue { font-family: Inter, sans-serif; font-weight: 500; fill: #4a8ede; }
.ic-dark { font-family: Inter, sans-serif; font-weight: 600; fill: #222; }
.ic-new { font-family: Inter, sans-serif; font-weight: 600; fill: #4a96f2; }

/* status bar */
.statusbar { height: 63px; flex: none; display: grid; grid-template-columns: 1fr auto 1fr; align-items: center; background: #f9f9f9; border-top: 2px solid #ddd; padding-right: 16px; }
.status-left { display: flex; align-items: center; height: 100%; }
.env { width: 185px; height: 100%; background: #5192d8; color: #fff; font-size: 23.700px; font-weight: 600; display: flex; align-items: center; padding-left: 16px; }
.env i { width: 16px; height: 16px; border-radius: 50%; background: #2f6bb0; margin-right: 12px; }
.release { margin-left: 18px; display: flex; align-items: center; gap: 16px; font-size: 24px; font-weight: 500; color: #777; }
.status-mid { font-size: 24px; color: #888; }
.status-right { display: flex; justify-content: flex-end; gap: 33px; padding-right: 17px; }
.help-mark { font-family: Inter, sans-serif; font-weight: 700; fill: #f9f9f9; }
```
